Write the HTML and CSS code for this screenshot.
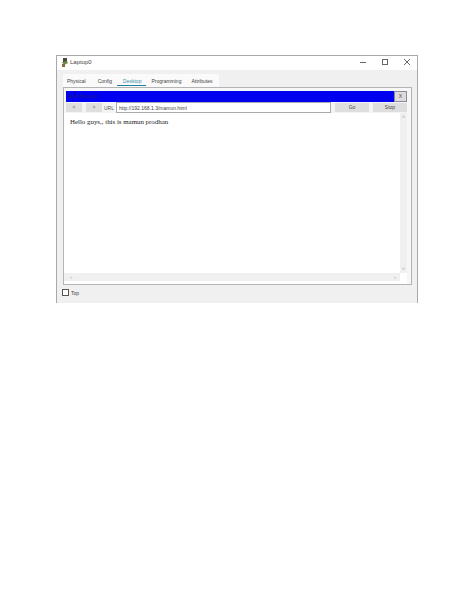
FILE: index.html
```html
<!DOCTYPE html>
<html lang="en">
<head>
<meta charset="utf-8">
<title>Laptop0</title>
<link rel="stylesheet" href="styles.css">
</head>
<body>
<div class="window">
  <div class="titlebar">
    <svg class="app-icon" width="8" height="9" viewBox="0 0 8 9"><path d="M2 0h4v4H2z" fill="#4a4638"/><path d="M1 4l5-1 1 2-4 2z" fill="#6d8a4a"/><path d="M1 6h3v3H1z" fill="#8a6a40"/></svg>
    <span class="title">Laptop0</span>
    <div class="controls">
      <svg width="8" height="8" viewBox="0 0 8 8"><path d="M1 4.5h6" stroke="#666" fill="none"/></svg>
      <svg width="8" height="8" viewBox="0 0 8 8"><rect x="1.5" y="1.5" width="5" height="5" stroke="#666" fill="none"/></svg>
      <svg width="8" height="8" viewBox="0 0 8 8"><path d="M1 1l6 6M7 1L1 7" stroke="#666" fill="none"/></svg>
    </div>
  </div>
  <div class="body">
    <div class="tabs">
      <span class="tab">Physical</span>
      <span class="tab">Config</span>
      <span class="tab active">Desktop</span>
      <span class="tab">Programming</span>
      <span class="tab">Attributes</span>
    </div>
    <div class="panel">
      <div class="bluebar"><span class="bluebar-title">Web Browser</span><span class="close">X</span></div>
      <div class="toolbar">
        <span class="btn nav">&lt;</span>
        <span class="btn nav">&gt;</span>
        <span class="url-label">URL</span>
        <span class="url">http://192.168.1.3/mamun.html</span>
        <span class="btn action">Go</span>
        <span class="btn action">Stop</span>
      </div>
      <div class="view">
        <div class="view-main">
          <div class="content">Hello guys,, this is mamun prodhan</div>
          <div class="hscroll"><span class="arrow">‹</span><span class="arrow">›</span></div>
        </div>
        <div class="vscroll"><span class="arrow">˄</span><span class="arrow">˅</span></div>
      </div>
    </div>
    <label class="top"><span class="check"></span>Top</label>
  </div>
</div>
</body>
</html>
```
FILE: styles.css
```css
html, body { margin: 0; height: 100%; background: #fff; }
body { padding: 55px 0 0 56px; box-sizing: border-box; font-family: "Liberation Sans", Arial, sans-serif; }
.window { width: 362px; height: 248px; box-sizing: border-box; border: 1px solid #a9a9a9; border-bottom: 0; background: #f0f0f0; display: flex; flex-direction: column; }
.titlebar { height: 14px; box-sizing: border-box; padding: 0 0 2px 4px; background: #fff; display: flex; align-items: center; flex: none; }
.app-icon { margin-right: 1px; }
.title { font-size: 6px; color: #444; }
.controls { margin-left: auto; display: flex; gap: 14px; padding-right: 6px; }
.body { flex: 1; padding: 4px 4px 0 5px; display: flex; flex-direction: column; }
.tabs { display: flex; height: 13px; width: 156px; margin-left: 1px; background: #fafafa; flex: none; }
.tab { font-size: 5px; color: #444; padding: 0 5px; line-height: 14px; }
.tab:first-child { padding: 0 7px 0 4px; }
.tab.active { color: #3a8fa8; border-bottom: 1px solid #1f7f9f; height: 11px; line-height: 14px; padding-left: 6px; }
.panel { width: 349px; height: 198px; margin-left: 1px; box-sizing: border-box; border: 1px solid #b4b4b4; background: #f7f7f7; padding: 3px 4px 0 2px; display: flex; flex-direction: column; flex: none; }
.bluebar { height: 11px; background: #0000f0; display: flex; justify-content: space-between; align-items: stretch; flex: none; }
.bluebar-title { font-size: 5px; color: #1a1a8a; line-height: 11px; padding-left: 2px; }
.close { width: 13px; background: #dcdcdc; border: 1px solid #8a8a9a; box-sizing: border-box; font-size: 5px; line-height: 9px; text-align: center; color: #444; }
.toolbar { height: 11px; display: flex; align-items: center; flex: none; background: #f4f4f4; }
.btn { height: 9px; background: #dedede; font-size: 5px; line-height: 9px; text-align: center; color: #444; }
.nav { width: 16px; margin-right: 4px; }
.nav + .nav { margin-right: 2px; }
.url-label { font-size: 5px; color: #555; width: 12px; }
.url { width: 215px; height: 11px; box-sizing: border-box; border: 1px solid #aaa; background: #fff; font-size: 5px; line-height: 10px; padding-left: 2px; color: #444; margin-right: 4px; }
.action { width: 34px; margin-right: 4px; }
.action:last-child { margin-right: 0; }
.view { flex: 1; display: flex; background: #fff; margin-left: -2px; }
.view-main { flex: 1; display: flex; flex-direction: column; }
.content { flex: 1; padding: 4px 0 0 6px; font-family: "Liberation Serif", "Times New Roman", serif; font-size: 6.9px; color: #222; line-height: 10px; }
.hscroll { height: 8px; background: #f0f0f0; margin-bottom: 3px; display: flex; justify-content: space-between; align-items: center; padding: 0 4px 0 6px; }
.vscroll { width: 7px; background: #f0f0f0; margin-bottom: 11px; display: flex; flex-direction: column; justify-content: space-between; align-items: center; }
.arrow { font-size: 6px; color: #aaa; line-height: 8px; }
.top { display: flex; align-items: center; font-size: 5px; color: #444; margin-top: 4px; gap: 2px; }
.check { width: 5px; height: 5px; background: #fff; border: 1px solid #555; }
```
